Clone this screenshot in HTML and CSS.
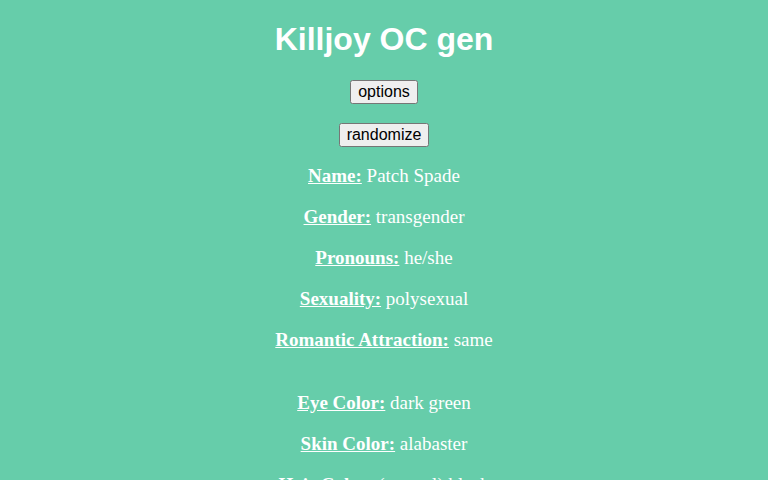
FILE: index.html
```html
<!DOCTYPE html>
<html lang="en">

<head>
  <meta charset="UTF-8">
  <meta name="viewport" content="width=device-width, initial-scale=1.0">
  <title>Killjoy OC gen</title>
  <link rel="stylesheet" href="styles.css">
</head>

<body>
  <h1>Killjoy OC gen</h1>

  <div class="btn-row"><button class="btn">options</button></div>
  <div class="btn-row last"><button class="btn">randomize</button></div>

  <!-- identity -->
  <p class="first"><span class="label">Name:</span> Patch Spade</p>
  <p><span class="label">Gender:</span> transgender</p>
  <p><span class="label">Pronouns:</span> he/she</p>
  <p><span class="label">Sexuality:</span> polysexual</p>
  <p><span class="label">Romantic Attraction:</span> same</p>

  <!-- looks -->
  <p class="gap"><span class="label">Eye Color:</span> dark green</p>
  <p><span class="label">Skin Color:</span> alabaster</p>
  <p><span class="label">Hair Color:</span> (natural) black</p>
</body>

</html>
```

FILE: styles.css
```css
body {
  margin: 0 8px;
  background: #66cdaa;
  color: #fff;
  text-align: center;
  font-family: "Liberation Serif", serif;
}

h1 {
  font-family: "Liberation Sans", Arial, sans-serif;
  font-size: 32px;
  margin: 21px 0 22px;
}

.btn-row {
  display: flex;
  justify-content: center;
  margin: 19px 0;
}

.btn-row.last {
  margin-bottom: 18px;
}

.btn {
  font-family: "Liberation Sans", Arial, sans-serif;
  font-size: 16px;
  color: #000;
}

p {
  font-size: 19px;
  margin: 19px 0;
}

p.first {
  margin-top: 18px;
}

.label {
  font-weight: bold;
  text-decoration: underline;
}

/* extra break before the looks block */
p.gap {
  margin-top: 41px;
}
```
